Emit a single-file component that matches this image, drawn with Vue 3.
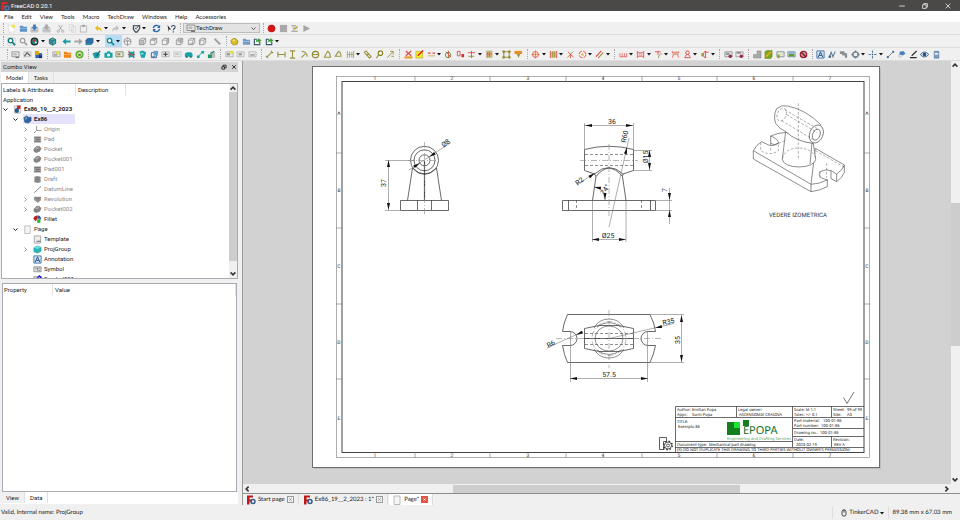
<script setup>
import { ref } from 'vue'

const menus = ['File', 'Edit', 'View', 'Tools', 'Macro', 'TechDraw', 'Windows', 'Help', 'Accessories']

/* ---- icon shapes, all drawn on a 20 x 20 grid ---- */
const cube = (c, f = 'none') => `<path fill="${f}" stroke="${c}" stroke-width="1.8" d="M10 2l7 3.500v9l-7 3.500-7-3.500v-9z"/><path fill="none" stroke="${c}" stroke-width="1.600" d="M3 5.500l7 3.500 7-3.500M10 9v9"/>`
const face = (n) => `<path fill="#f4f4f4" stroke="#8c8c8c" stroke-width="1.800" d="M3 7l4-4h10v10l-4 4H3z"/><path fill="none" stroke="#8c8c8c" stroke-width="1.600" d="M3 7h10v10M13 7l4-4"/><path fill="#9a9a9a" d="${['M3 7h10v10H3z', 'M3 7l4-4h10l-4 4z', 'M13 7l4-4v10l-4 4z', 'M6 4h10v9H6z', 'M3 17l4-4h10l-4 4z', 'M3 7l4-4v10l-4 4z'][n]}" opacity=".6"/>`
const mag = (c) => `<circle cx="8" cy="8" r="5" fill="#fff" stroke="${c}" stroke-width="3"/><path stroke="${c}" stroke-width="3.500" d="M12 12l6 6"/>`
const folder = (c) => `<path fill="${c}" d="M2 4h6l2 2h8v11H2z"/><path fill="#fff" opacity=".35" d="M2 9h16v2H2z"/>`
const disk = (c, a) => `<path fill="#d8d8d8" stroke="#9b9b9b" d="M2 10l3-4h10l3 4v8H2z"/><path fill="${c}" d="M4 13h12v3H4z"/><path fill="${a}" d="M7 1h6v6h4l-7 7-7-7h4z"/>`
const page = (c, e) => `<path fill="#e9e9e9" stroke="${c}" stroke-width="1.800" d="M2 4h16v11H2z"/>${e}`
const line = (c, d, w = 2) => `<path fill="none" stroke="${c}" stroke-width="${w}" d="${d}"/>`
const O = '#9a9440'
const R = '#e0504c'
const T = '#17a2a8'
const N = '#2c5a8c'

const shapes = {
  newdoc: `<path fill="#fff" stroke="#ccc" d="M4 3h10l3 3v12H4z"/><circle cx="14" cy="5" r="4" fill="#f5e14c"/>`,
  open: folder('#5d93c7'),
  save: disk('#aaa', '#3b79bd'),
  saveas: disk('#bbb', '#a9a9a9'),
  cut: line('#aaa', 'M6 2l7 12M14 2L7 14') + '<circle cx="5" cy="16" r="2.500" fill="none" stroke="#aaa" stroke-width="2"/><circle cx="15" cy="16" r="2.500" fill="none" stroke="#aaa" stroke-width="2"/>',
  copy: '<path fill="#f4f4f4" stroke="#ccc" stroke-width="1.500" d="M3 2h9v12H3zM8 6h9v12H8z"/>',
  paste: '<path fill="#eee" stroke="#b5b5b5" stroke-width="2" d="M3 4h14v14H3z"/><path fill="#999" d="M7 2h6v4H7z"/>',
  undo: '<path fill="#e6bd1c" d="M9 3v4c6 0 9 4 8 11-2-5-4-6-8-6v4L2 9z"/>',
  redo: '<path fill="#c2c2c2" d="M11 3v4c-6 0-9 4-8 11 2-5 4-6 8-6v4l7-7z"/>',
  draw: `<path fill="none" stroke="#34424e" stroke-width="2.500" d="M3 4h14v6l-6 8h-3l-5-6z"/>` + line('#34424e', 'M10 10l6-8M6 9l4 2'),
  refresh: line('#2a67aa', 'M3 9c1-6 9-8 13-3M17 11c-1 6-9 8-13 3', 3) + '<path fill="#2a67aa" d="M18 2v7h-7zM2 18v-7h7z"/>',
  help: '<path fill="#333" d="M1 2l8 10-4 0-1 5z"/><path fill="none" stroke="#37516b" stroke-width="2.500" d="M10 7c0-5 8-5 8 0 0 3-4 3-4 7M14 16v3"/>',
  rec: '<circle cx="10" cy="10" r="8.500" fill="#d21616"/>',
  stop: '<path fill="#a9a9a9" d="M2 2h16v16H2z"/>',
  macro: '<path fill="none" stroke="#909090" stroke-width="2.200" d="M3 4h10M6 9h10M3 16h14"/>' + line('#c7a12b', 'M8 13l9-8', 2.5),
  play: '<path fill="#a4a4a4" d="M3 2l15 8-15 8z"/>',
  fit: '<path fill="#fff" stroke="#aaa" d="M2 2h16v16H2z"/>' + mag('#12777d'),
  fitsel: mag('#a0a0a0'),
  style: '<circle cx="10" cy="10" r="7.500" fill="#1c8686" stroke="#222" stroke-width="2.500"/><path fill="#c43232" d="M6 6h5v5H6z"/><circle cx="13" cy="12" r="2" fill="#fff"/>',
  bbox: cube('#235c60', '#3bb2a0') + '<path fill="#3f78ad" d="M5 8h6v7H5z"/>',
  back: '<path fill="#1b9aa0" d="M1 10l8-7v5h10v4H9v5z"/>',
  fwd: '<path fill="#a5a5a5" d="M19 10l-8-7v5H1v4h10v5z"/>',
  link: '<path fill="#2f6fa8" stroke="#1d3f66" d="M2 7l4-4h12v10l-5 4H2z"/><path fill="#1b9aa0" d="M2 18l6-6v3h5v3z"/>',
  zoom: mag('#11868c'),
  iso: cube('#8f8f8f', '#f4f4f4') + line('#8f8f8f', 'M0 10h20M10 0v20', 1),
  ...Object.fromEntries([0, 1, 2, 3, 4, 5].map((n) => ['f' + n, face(n)])),
  measure: line('#9a9a9a', 'M4 4l12 12', 5) + line('#fff', 'M6 4l10 10', 1),
  part: '<path fill="#d9bb26" stroke="#9b8213" stroke-width="1.500" d="M2 8l5-5 6 1 5 5-2 7-8 2-5-4z"/><path fill="#f3e37a" d="M5 8l3-3 4 2-3 4z"/>',
  group: folder('#6f9bc9'),
  linkmake: '<path fill="#fff" stroke="#34586b" stroke-width="2.500" d="M15 11v6H3V5h6"/><path fill="#3c9f3c" d="M6 13c0-6 3-8 6-8V2l7 6-7 5v-3c-3 0-4 1-6 3z"/>',
  pg: page('#888', '<path fill="#bbb" d="M5 7h8v5H5z"/><path fill="#777" d="M10 15h8v3h-8z"/>'),
  tmpl: page('#bbb', line('#666', 'M3 14l6-8 7 7', 3)),
  redraw: '<path fill="#2e62b5" d="M3 7h15v11H3z"/><path fill="#d9a51b" d="M2 2h9v9H2z"/><path fill="#1a3470" d="M11 12h7v6h-7z"/>',
  pgnew: page('#999', '<circle cx="13" cy="6" r="4" fill="#e8df45"/><path fill="#aaa" d="M4 8h8v5H4z"/>'),
  pgopen: folder('#ef8413'),
  pgref: '<circle cx="10" cy="10" r="7" fill="#fff" stroke="#66ad2e" stroke-width="4"/><path fill="#4e8b20" d="M7 8h6v5H7z"/>',
  view: `<path fill="${T}" stroke="#127177" d="M2 8l9-3 6 4-2 8-9 1z"/>` + line('#146a70', 'M10 13l8-11', 3),
  active: `<path fill="${T}" d="M1 6h5l2-3h5l2 3h4v11H1z"/><circle cx="10" cy="11" r="3.500" fill="#e8ffff"/>`,
  sec: page('#79804a', '<path fill="#9a9b4d" d="M5 7h7v5H5z"/>'),
  hatched: `<path fill="${T}" d="M4 4h12v12H4z"/>` + line('#a05a5a', 'M3 3l14 14M5 2v16M15 2v16M2 10h16', 1.8),
  detail: `<path fill="${T}" d="M3 4l7-3 8 4-3 12H7z"/><path fill="#8ee0de" d="M6 6h6v4H6z"/>`,
  spread: `<path fill="#fff" stroke="${N}" stroke-width="2" d="M3 6h11v11H3z"/><path fill="#6a9ccc" d="M8 2h10v10H8z"/>` + line(N, 'M5 14h7'),
  move: page('#aaa', line('#3c4146', 'M10 5v9M5 9.500h10', 2.5)),
  drafts: page('#c5c5c5', '<path fill="#c3c3c3" d="M5 7h8v4H5z"/>'),
  arch: `<path fill="${T}" d="M2 8l5-3h9l3 4v6H2z"/><path fill="#0c686d" d="M4 14h4v3H4zM13 14h4v3h-4z"/>`,
  proj: line(T, 'M4 15l11-11', 2) + `<path fill="${T}" d="M2 12h6v6H2zM12 2h6v6h-6z"/>`,
  clip: '<path fill="#bababa" d="M7 4h11v13H7z"/><path fill="#1b9a68" d="M2 10h9v8H2z"/>' + line('#188', 'M8 8l8-5', 2.5),
  clipnew: page('#aaa', '<path fill="#8aa08a" d="M4 7h7v5H4z"/><circle cx="15" cy="5" r="4" fill="#e4e04a"/>'),
  clipadd: page('#b5b5b5', '<path fill="#999" d="M6 7h7v5H6z"/>'),
  clipdel: page('#b5b5b5', '<path fill="#aaa" d="M5 9h10v4H5z"/>'),
  len: line(O, 'M4 16l12-12M2 13l5 5M13 2l5 5', 2.5),
  hor: line(O, 'M2 4v12M18 4v12M2 10h16', 2.5),
  ver: line(O, 'M4 2h12M4 18h12M10 2v16', 2.5),
  rad: line(O, 'M4 3c8 0 12 6 12 12M3 17l9-9', 2.5),
  dia: '<circle cx="10" cy="10" r="7" fill="none" stroke="#8d8726" stroke-width="2.500"/>' + line(O, 'M2 10h16', 2.5),
  ang: line(O, 'M2 16h16M3 16L10 3c4 1 6 5 6 12', 2.5),
  ang3: line(O, 'M10 3L3 14h10M10 3c5 2 6 6 5 13', 2.5),
  ext: line('#a5a36f', 'M3 2v16M8 4v13M13 4v13M17 2v16M3 10h14', 2),
  chain: line(O, 'M3 5l4-3 5 6-4 3zM9 12l4-3 5 6-4 3z', 2.5),
  ball: line(O, 'M3 18l5-7', 2.5) + '<circle cx="12" cy="7" r="5" fill="none" stroke="#8d8726" stroke-width="2.500"/>',
  axo: line(O, 'M3 17L16 3M12 14h6M9 3h7v7', 2),
  erase: line(R, 'M4 2l12 11M16 2L4 13', 3) + '<path fill="#e5a02d" d="M1 14h18v5H1z"/>',
  attr: '<path fill="#f4ec29" stroke="#9b8d16" d="M2 3h15v15H2z"/>' + line('#d22', 'M6 13L18 1', 3),
  cen: line(R, 'M2 7h6M12 7h6', 3) + line('#dba94c', 'M2 13h16', 2),
  bolt: line(R, 'M4 4l12 12M10 2v16', 2) + '<circle cx="9" cy="11" r="6" fill="none" stroke="#6a8a2a" stroke-width="2"/>',
  vert: '<path fill="none" stroke="#c55" stroke-width="2" d="M3 3h6v10H3z"/><path fill="#c33" d="M12 9h6v7h-6z"/>',
  cline: line(R, 'M2 6h16M10 2v16') + line(O, 'M3 14h13'),
  hat: '<path fill="#d7b67e" stroke="#9b8" d="M3 2h13v15H3z"/>' + line(R, 'M6 4v12M10 4v12M3 9h13', 1.5),
  frame: '<path fill="none" stroke="#9c9440" stroke-width="2.500" d="M4 4h12v12H4z"/><path fill="#8d8726" d="M1 1h5v5H1zM14 1h5v5h-5zM1 14h5v5H1zM14 14h5v5h-5z"/>',
  weld: '<path fill="#e99b1f" d="M1 2h17v7H1z"/><path fill="#9c9440" d="M6 9h8l-4 9z"/>' + line(R, 'M4 4l3 3M12 4l3 3'),
  target: `<circle cx="10" cy="10" r="6.500" fill="#fbe9cf" stroke="${R}" stroke-width="2"/>` + line('#d9663f', 'M10 1v18M1 10h18', 1.5),
  thread: '<path fill="#c9c58d" d="M4 3h12v14H4z"/>' + line(R, 'M3 2v16M17 2v16') + line('#9c9440', 'M8 3v14M12 3v14'),
  inter: line(O, 'M3 17L16 3') + line(R, 'M4 4l13 12M10 9v9'),
  arc: `<circle cx="10" cy="10" r="7.500" fill="none" stroke="${R}" stroke-width="2" stroke-dasharray="9 3"/><circle cx="10" cy="10" r="2.500" fill="#e3a321"/>`,
  par: line(R, 'M2 15L14 2', 2.5) + line(O, 'M7 18L18 6', 2.5),
  posh: line(R, 'M2 7v8M7 7v8M12 7v8M17 7v8M2 15h16', 1.6),
  posc: line(R, 'M3 2v16M17 2v16M3 6h14M3 14h14', 1.8) + line('#e99', 'M7 8h6v4H7z', 2),
  posa: line(R, 'M2 4h13M9 2v9') + line(O, 'M10 18c0-6 3-9 8-10'),
  cham: line(R, 'M3 3v4M17 3v4M3 5h14M3 17l3-8h8l3 8', 1.8) + line('#c3a35d', 'M2 9h16', 1.5),
  arcl: line(R, 'M3 17h14M5 15c0-3 3-5 5-5s5 2 5 5', 2.2) + '<circle cx="10" cy="6" r="4" fill="none" stroke="#e0504c" stroke-width="2.200"/>',
  fmt: line(R, 'M14 3C5 3 4 17 14 17M12 3v14M14 5h5', 2.2) + '<path fill="#9c9440" d="M3 7h5v7H3z"/>',
  exsvg: page('#888', '<path fill="#8c9c8c" d="M4 6h8v5H4z"/><circle cx="14" cy="14" r="4" fill="#9d2846"/>'),
  exdxf: page('#999', '<path fill="#777" d="M4 5h9v3H4z"/><circle cx="14" cy="14" r="4" fill="#9d2846"/>'),
  hatch: '<path fill="#a9a9a9" stroke="#878787" d="M9 2h9v16H1V10h8z"/>',
  geo: '<path fill="#75a71c" stroke="#5f7a1b" d="M2 4l4-3h12v14l-3 4H2z"/><path fill="#dcae26" d="M3 12L15 3l2 2L5 17z"/>',
  sym: page('#7b8692', '<path fill="#dbe8c0" d="M5 6h10v6H5z"/><path fill="#8fa52d" d="M3 10h5v8H3z"/>'),
  img: page('#5a7d99', '<path fill="#86b4d8" d="M4 5h12v4H4z"/><path fill="#5e9d2c" d="M4 9h12v5H4z"/>'),
  toggle: '<circle cx="10" cy="10" r="7" fill="#b9a9a9" stroke="#a51f2d" stroke-width="3"/>' + line('#7d1b28', 'M5 5l10 10', 3),
  anno: '<path fill="#dce9f6" stroke="#3a6fa8" stroke-width="2" d="M2 2h16v16H2z"/><path fill="none" stroke="#244f83" stroke-width="2.200" d="M5 16l5-12 5 12M7 12h6"/>',
  leader: line('#5d7e9d', 'M3 16L7 5l4 10L16 3', 2.5) + '<circle cx="4" cy="15" r="3" fill="#476784"/>',
  rich: '<path fill="#8c8f93" d="M2 3h9l3 4h4v10h-5v-5H8l-2-3H2z"/>',
  cosv: '<circle cx="10" cy="10" r="6" fill="none" stroke="#6f818f" stroke-width="3"/>' + line('#6f818f', 'M10 1v5M10 14v5M1 10h5M14 10h5', 3),
  cosm: line('#6684a3', 'M10 1v6M10 13v6M1 10h6M13 10h6', 2.5) + '<circle cx="10" cy="10" r="1.500" fill="#2c5a8c"/>',
  cosl: line('#5b84ad', 'M4 16L16 4', 2) + '<circle cx="4" cy="16" r="2.500" fill="#4a7094"/><circle cx="16" cy="4" r="2.500" fill="#4a7094"/>',
  eraser: '<path fill="#4a83bd" d="M6 4l8-2 5 6-6 4-8-2z"/><path fill="#d4d4d4" d="M3 10l9 4-5 4-5-3z"/>',
  decor: line('#3f3f3f', 'M6 13L17 2', 3) + line('#111', 'M2 17h15', 2.5),
  eye: '<path fill="#e7eef5" stroke="#2f5277" stroke-width="2.200" d="M1 10c5-7 13-7 18 0-5 7-13 7-18 0z"/><circle cx="10" cy="10" r="4" fill="#1e4d84"/>',
  weldsym: '<path fill="#7ea2c5" stroke="#4c6d8f" stroke-width="1.500" d="M5 3h10v15H5z"/><path fill="#fff" d="M6 7h8v3H6z"/>',
}

/* "|" is a drag handle, "-" a plain gap, a trailing "^" adds a drop-down arrow.
   Widths are shares of a row of 1920 units. */
function row(spec) {
  const items = spec.split(' ').map((t) => {
    if (t === '|') return { kind: 'handle', span: 12 }
    if (t === '-') return { kind: 'gap', span: 6 }
    if (t === 'pad') return { kind: 'gap', span: 8 }
    if (t === 'workbench') return { kind: 'workbench', span: 154 }
    const drop = t.endsWith('^')
    return { kind: 'tool', name: drop ? t.slice(0, -1) : t, drop, span: drop ? 35 : 23 }
  })
  const used = items.reduce((s, i) => s + i.span, 0)
  return [...items, { kind: 'gap', span: 1920 - used }]
}

const rows = [
  row('| newdoc open save saveas - cut copy paste - undo^ redo^ - draw^ - refresh - help | workbench | rec stop macro play'),
  row('| fit fitsel style^ bbox - back fwd link^ - zoom^ iso - f0 f1 f2 - f3 f4 f5 - measure | part group linkmake linkmake^'),
  row('pad | pg tmpl redraw | pgnew pgopen pgref | view active sec hatched detail spread move drafts arch proj clip | clipnew clipadd clipdel | len hor ver rad dia ang ang3 ext^ chain ball axo | erase attr cen^ bolt vert cline^ hat^ frame weld | target^ thread^ inter arc^ par^ | posh^ posc^ posa^ cham arcl^ fmt^ | exsvg exdxf | hatch geo sym img toggle | anno leader rich cosv^ cosm^ cosl eraser decor eye weldsym'),
]

const treeIcons = {
  doc: '<path fill="#eee" stroke="#aaa" stroke-width="1.500" d="M3 2h14v16H3z"/><path fill="#c22" d="M9 1h8l-1 8H9z"/><path fill="#2f5b92" d="M4 9l5-3 4 3v7l-4 2-5-2z"/>',
  body: '<path fill="#2f65a4" stroke="#173c68" d="M2 6l6-4 4 3h6v8l-6 5-8-2z"/><path fill="#6f9ccb" d="M4 7l4-3 2 4-4 3z"/>',
  origin: line('#8b8b8b', 'M8 2v10h11M8 12l-6 6', 2),
  pad: '<path fill="#a5a5a5" d="M2 3h16v14H2z"/>' + line('#696969', 'M4 6h12M4 14h12M6 10h9', 2),
  pocket: '<path fill="#858585" stroke="#6c6c6c" d="M2 9l6-6h6l4 4-3 7-8 3-5-3z"/><path fill="#b5b5b5" d="M8 5h6l-4 4H5z"/>',
  draft: '<path fill="#8f8f8f" d="M3 4l7-2 7 2v12l-7 2-7-2z"/>' + line('#777', 'M5 6h10M5 10h10M5 14h10', 1.5),
  datum: line('#777', 'M3 17L18 3', 2),
  rev: '<path fill="#9c9c9c" d="M2 4h16v7l-7 7-9-7z"/>' + line('#6d6d6d', 'M4 7h12M8 11h6', 2),
  fillet: '<path fill="#b81f1f" d="M1 9c0-6 5-8 9-8v9l-4 4z"/><path fill="#274f8a" d="M10 1c5 0 9 4 8 10h-8z"/><path fill="#27b53a" stroke="#fff" d="M9 9h8v9H9z"/>',
  page: '<path fill="#f6f6f6" stroke="#a5a5a5" stroke-width="1.500" d="M4 2h12v17H4z"/>',
  template: '<path fill="#eee" stroke="#9a9a9a" stroke-width="1.800" d="M3 2h14v16H3z"/>' + line('#777', 'M8 14h9', 2.500),
  projgroup: '<path fill="#25b7bd" stroke="#14858a" d="M2 6l8-4 8 3v9l-8 4-8-3z"/><path fill="#70dde0" d="M2 6l8-4 8 3-8 4z"/>',
  anno: shapes.anno,
  symbol: '<path fill="#ddd" stroke="#888" stroke-width="1.800" d="M2 4h16v11H2z"/>' + line('#777', 'M5 7h5v5M12 7h4M12 12h4', 1.800),
  symbol1: '<path fill="#ddd" stroke="#888" stroke-width="1.800" d="M2 4h16v11H2z"/>' + line('#1a1aee', 'M7 10l7-8 4 3-7 9', 3),
}

const tree = [
  { t: 'Ex86_19__2_2023', i: 'doc', l: 0, c: 'open', bold: true },
  { t: 'Ex86', i: 'body', l: 1, c: 'open', bold: true, sel: true },
  { t: 'Origin', i: 'origin', l: 2, c: 'shut', hidden: true },
  { t: 'Pad', i: 'pad', l: 2, c: 'shut', hidden: true },
  { t: 'Pocket', i: 'pocket', l: 2, c: 'shut', hidden: true },
  { t: 'Pocket001', i: 'pocket', l: 2, c: 'shut', hidden: true },
  { t: 'Pad001', i: 'pad', l: 2, c: 'shut', hidden: true },
  { t: 'Draft', i: 'draft', l: 2, hidden: true },
  { t: 'DatumLine', i: 'datum', l: 2, hidden: true },
  { t: 'Revolution', i: 'rev', l: 2, c: 'shut', hidden: true },
  { t: 'Pocket002', i: 'pocket', l: 2, c: 'shut', hidden: true },
  { t: 'Fillet', i: 'fillet', l: 2 },
  { t: 'Page', i: 'page', l: 1, c: 'open' },
  { t: 'Template', i: 'template', l: 2 },
  { t: 'ProjGroup', i: 'projgroup', l: 2, c: 'shut' },
  { t: 'Annotation', i: 'anno', l: 2 },
  { t: 'Symbol', i: 'symbol', l: 2 },
  { t: 'Symbol001', i: 'symbol1', l: 2 },
]

const docTabs = ref([
  { t: 'Start page', i: 'app' },
  { t: 'Ex86_19__2_2023 : 1*', i: 'app' },
  { t: 'Page*', i: 'page', active: true },
])

/* ---- drawing sheet ---- */
const columns = [375, 452, 528, 603, 679, 754, 830]
const columnTicks = [415, 490, 566, 642, 717, 793]
const bands = [['A', 113], ['B', 190], ['C', 266], ['D', 342], ['E', 418]]
const bandTicks = [153, 228, 304, 379]

/* arrow heads: tip x, tip y, direction in degrees (0 points right) */
const arrows = [
  [388.5, 160, -90], [388.5, 210, 90], [420, 163, -32], [429, 157, 148],
  [585, 125.5, 180], [633, 125.5, 0], [649.5, 150, -90], [649.5, 170, 90],
  [669.5, 200, 90], [669.5, 210, -90], [627, 147, -77], [595, 173, -35], [594, 187, 190], [605, 200, 90],
  [592, 239.5, 180], [626, 239.5, 0],
  [570, 378.5, 180], [648, 378.5, 0], [681.5, 315, -90], [681.5, 362, 90],
  [655, 328, 167], [576, 335, 155],
]

const dims = [
  ['37', 386, 183, -90], ['Ø8', 447, 145, -35], ['36', 612, 124, 0], ['R60', 627, 137, -77],
  ['Ø15', 648, 157, -90], ['7', 667, 190, -90], ['R2', 581, 183, -40], ['74°', 607, 191, -55],
  ['Ø25', 608, 238, 0], ['57.5', 609, 377, 0], ['R35', 669, 324, -13], ['35', 680, 340, -90], ['R6', 552, 346, -30],
]

const block = [
  ['Author:', 677, 411], ['Emilian Popa', 692, 411], ['Appr.:', 677, 416], ['Sorin Popa', 692, 416],
  ['Legal owner:', 738, 411], ['ASCENSOMIX CRAIOVA', 739, 416],
  ['Scale: M 1:1', 794, 411], ['Toler.: +/- 0.1', 794, 416], ['Sheet:', 833, 411], ['99 of 99', 847, 411],
  ['Size:', 833, 416], ['A3', 847, 416], ['TITLE:', 677, 423], ['Exemplu 86', 678, 428],
  ['Part material:', 794, 422], ['100-01-86', 823, 422], ['Part number:', 794, 427], ['100-01-86', 821, 427],
  ['Drawing no.:', 794, 434], ['100-01-86', 820, 434], ['Date:', 794, 441], ['2023-02-19', 796, 446],
  ['Revision:', 833, 441], ['REV A', 834, 446], ['Document type:', 677, 446], ['Mechanical part drawing', 709, 446],
]
</script>

<template>
  <div class="app">
    <header class="titlebar">
      <svg class="ic" viewBox="0 0 20 20"><path fill="#d42a2a" d="M3 2h12v4H8v4h5v4H8v5H3z" /><circle cx="14" cy="14" r="4" fill="none" stroke="#4a78b5" stroke-width="3" /></svg>
      <span class="title">FreeCAD 0.20.1</span>
      <div class="winbtns">
        <button aria-label="Minimize"><svg viewBox="0 0 20 20"><path d="M3 10h14" /></svg></button>
        <button aria-label="Restore"><svg viewBox="0 0 20 20"><path d="M4 7h9v9H4zM7 7V4h9v9h-3" /></svg></button>
        <button aria-label="Close"><svg viewBox="0 0 20 20"><path d="M4 4l12 12M16 4L4 16" /></svg></button>
      </div>
    </header>

    <nav class="menubar">
      <button v-for="m in menus" :key="m">{{ m }}</button>
    </nav>

    <div v-for="(r, n) in rows" :key="n" class="toolrow">
      <div v-for="(it, k) in r" :key="k" :class="['slot', it.kind]" :style="{ flexGrow: it.span }">
        <template v-if="it.kind === 'tool'">
          <button class="tool" :class="{ hot: it.name === 'zoom' }" :aria-label="it.name">
            <svg class="ic" viewBox="0 0 20 20" v-html="shapes[it.name]"></svg>
            <svg v-if="it.drop" class="drop" viewBox="0 0 8 8"><path d="M0 2h8L4 7z" /></svg>
          </button>
        </template>
        <label v-else-if="it.kind === 'workbench'" class="bench">
          <svg class="ic" viewBox="0 0 20 20" v-html="shapes.pg"></svg>
          <select aria-label="Workbench"><option>TechDraw</option></select>
          <svg class="chev" viewBox="0 0 10 10"><path d="M1 3l4 4 4-4" /></svg>
        </label>
      </div>
    </div>

    <div class="body">
      <aside class="dock">
        <div class="dockhead">
          <span>Combo View</span>
          <button aria-label="Float"><svg viewBox="0 0 20 20"><path d="M3 9h9v8H3zM7 9V4h10v9h-5" /></svg></button>
          <button aria-label="Close panel"><svg viewBox="0 0 20 20"><path d="M4 4l12 12M16 4L4 16" /></svg></button>
        </div>
        <div class="tabs top"><button class="on">Model</button><button>Tasks</button></div>

        <section class="treebox">
          <div class="treemain">
            <div class="cols"><span>Labels &amp; Attributes</span><span>Description</span></div>
            <div class="approw">Application</div>
            <ul>
              <li v-for="n in tree" :key="n.t" :class="['lv' + n.l, { muted: n.hidden, bold: n.bold, sel: n.sel }]">
                <svg class="twist" viewBox="0 0 10 10"><path v-if="n.c === 'open'" class="o" d="M1 3l4 4 4-4" /><path v-else-if="n.c" d="M3 1l4 4-4 4" /></svg>
                <span class="node"><svg class="ic" viewBox="0 0 20 20" v-html="treeIcons[n.i]"></svg>{{ n.t }}</span>
              </li>
            </ul>
          </div>
          <div class="vbar">
            <svg viewBox="0 0 10 10"><path d="M2 7l3-3 3 3" /></svg>
            <i class="tthumb"></i><i class="trest"></i>
            <svg viewBox="0 0 10 10"><path d="M2 3l3 3 3-3" /></svg>
          </div>
        </section>

        <section class="props"><div class="cols p"><span>Property</span><span>Value</span></div></section>
        <div class="tabs bottom"><button>View</button><button class="on">Data</button></div>
      </aside>

      <main class="mdi">
        <div class="canvasrow">
          <svg class="sheet" viewBox="243 61 708 423" preserveAspectRatio="xMidYMid meet">
            <rect x="314" y="68" width="567" height="401" fill="#bdbdbd" />
            <rect x="312.500" y="66.500" width="567" height="401" fill="#fff" stroke="#6e6e6e" />
            <rect x="336.500" y="76.500" width="533" height="381" class="thin" />
            <rect x="342" y="81.500" width="522" height="371" fill="none" stroke="#444" />
            <g class="thin">
              <path v-for="x in columnTicks" :key="x" :d="`M${x} 76v6M${x} 452v6`" />
              <path v-for="y in bandTicks" :key="y" :d="`M336 ${y}h6M864 ${y}h6`" />
            </g>
            <g class="zone">
              <template v-for="(x, n) in columns" :key="x"><text :x="x" y="80">{{ n + 1 }}</text><text :x="x" y="457">{{ n + 1 }}</text></template>
              <template v-for="b in bands" :key="b[0]"><text x="339" :y="b[1] + 2">{{ b[0] }}</text><text x="867" :y="b[1] + 2">{{ b[0] }}</text></template>
            </g>

            <!-- side elevation -->
            <g class="edge">
              <circle cx="424.500" cy="160.300" r="14" /><circle cx="424.500" cy="160.300" r="10.500" /><circle cx="424.500" cy="160.300" r="5.500" />
              <path d="M412.500 168L407.500 200.500M436.500 168L441.500 200.500M400.500 200.500h48v10h-48zM412.500 168Q424.500 180 436.500 168" />
              <path class="strong" d="M424.500 161v39" />
              <path d="M417.500 200v10M431.500 200v10" />
            </g>
            <path class="thin" d="M385 160.500h30M385 210.500h15M388.500 160v50M409 170L451 142.500" />
            <path class="center" d="M424.500 142v73M408 160.500h33" />

            <!-- front elevation -->
            <g class="edge">
              <path d="M584.500 149.500Q609 143 633.500 149.500V170.500L623 174M584.500 149.500V170.500L594.500 174Q609 161 623 174" />
              <path d="M594.500 174L596 176.500Q609 160 622.500 176.500L623 174M596 176.500L592.500 200.500M622.500 176.500L626 200.500M562.500 200.500h93v10h-93z" />
              <path d="M568.500 200v10M650.500 200v10" />
              <path class="dash" d="M576.500 200v10M641.500 200v10M585 154.500h48M585 165.500h48" />
            </g>
            <path class="center" d="M609 144v72M580 160.500h58" />
            <path class="thin" d="M584.500 123v26M633.500 123v26M584 125.500h49M609 227L629 138M633 150.500h19M633 170.500h19M649.500 150v20M656 200.500h16M656 210.500h16M669.500 188v36M577 184.500L595 173M594 187Q604 188 605 200M592.500 201v41M626 201v41M592 239.500h34" />

            <!-- plan -->
            <g class="edge">
              <path d="M567.500 314.500H650Q654.500 323 655.500 331.500H648A7 7 0 0 0 648 345.500H655.500Q654 354 650 362.500H567.500Q564 355 562.500 345.500H570A7 7 0 0 0 570 331.500H562.500Q563.500 323 567.500 314.500z" />
              <path d="M584.500 328.500L599 325.500H619L633.500 328.500V348.500L619 351.500H599L584.500 348.500z" />
              <path class="fine" d="M594 328A17 17 0 0 1 624 328M594 349A17 17 0 0 0 624 349M597 327Q609 318 621 327M597 350Q609 359 621 350" />
              <path class="strong" d="M584 338.500h49" />
              <ellipse class="fine" cx="609" cy="338.500" rx="14" ry="12.500" /><circle class="center" cx="609" cy="338.500" r="17" />
              <path class="dash" d="M585 333.500h48M585 344.500h48" />
            </g>
            <path class="center" d="M609 310v58M556 338.500h106" />
            <path class="thin" d="M570.500 331v51M647.500 331v51M570 378.500h78M609 338.500L674 323.500M650 314.500h34M650 362.500h34M681.500 315v47M547 348L583 331.500" />

            <!-- isometric -->
            <g class="iso" transform="translate(730 90) scale(.3333)">
              <path d="M70 182Q80 163 95 155L118 166Q130 170 145 160Q147 148 122 138Q140 129 168 127M256 175L343 225Q338 240 320 252L303 242Q290 236 272 244Q262 254 275 264L292 270Q268 282 243 283zM70 182V207L243 305V283M243 305Q270 302 292 290V268M320 252V275Q338 262 343 247V225M320 275L303 266V242M122 138V160Q132 168 145 160" />
              <path d="M70 182L243 283" />
              <path fill="#fff" d="M167 125L157 208A50 23 0 0 0 257 208L250 160Q205 152 167 125" />
              <path d="M167 125Q205 148 230 156" />
              <path fill="#fff" d="M167 125Q146 115 137 100Q129 78 140 56Q155 43 173 48Q230 60 272 104L248 160Q200 155 167 125M240 222L246 160" />
              <ellipse fill="#fff" cx="259" cy="132" rx="20" ry="28" transform="rotate(22 259 132)" />
              <ellipse cx="259" cy="134" rx="11" ry="17" transform="rotate(22 259 134)" />
              <g class="dash"><path d="M165 60L262 116M170 74L262 128M155 92L250 149M92 158V182Q120 200 145 182V158M122 160V185M157 205Q165 175 207 174Q250 177 257 205M257 182L343 232M270 243V270M290 220V264M205 40V210M145 160L170 150" /><ellipse cx="155" cy="74" rx="13" ry="20" transform="rotate(22 155 74)" /></g>
            </g>
            <text x="769" y="217" class="iso-label">VEDERE IZOMETRICA</text>

            <path v-for="(a, n) in arrows" :key="n" class="head" d="M0 0L-7 1.500V-1.500z" :transform="`translate(${a[0]} ${a[1]}) rotate(${a[2]})`" />
            <text v-for="d in dims" :key="d[0]" class="dimtext" :transform="`translate(${d[1]} ${d[2]}) rotate(${d[3]})`">{{ d[0] }}</text>

            <!-- title block -->
            <path class="edge" d="M675.500 452V406.500H864M675 417.500h189M793 428.500h71M793 436.500h71M675 441.500h118M675 447.500h189M736.500 406v11M792.500 406v41M831.500 406v11M831.500 436v11" />
            <path fill="none" stroke="#777" d="M843.500 397.500L847 403.500L854 392" />
            <g class="block">
              <text v-for="(b, n) in block" :key="n" :x="b[1]" :y="b[2]">{{ b[0] }}</text>
              <text x="677" y="451">(R) DO NOT DUPLICATE THIS DRAWING TO THIRD PARTIES WITHOUT OWNER'S PERMISSION!</text>
              <text x="727" y="440" class="sub">Engineering and Drafting Services</text>
            </g>
            <path fill="#12801c" d="M727 422h13v13h-13zM743 420h6v6h-6z" /><path fill="#19e632" d="M734 422h6v6h-6z" />
            <text x="743" y="434" class="logo">EPOPA</text>
            <g fill="#fff" stroke="#333"><path d="M664.500 449.500h-5v-12h7v4h-3v8" stroke-width=".8" /><circle cx="668" cy="445.500" r="4.200" stroke-width="1.500" stroke-dasharray="1.600 1.700" /><circle cx="668" cy="445.500" r="3.500" stroke-width=".8" /><circle cx="668" cy="445.500" r="1.500" stroke-width=".8" /></g>
          </svg>
          <div class="vbar big">
            <svg viewBox="0 0 10 10"><path d="M2 7l3-3 3 3" /></svg>
            <i class="b1"></i><i class="bthumb"></i><i class="b2"></i>
            <svg viewBox="0 0 10 10"><path d="M2 3l3 3 3-3" /></svg>
          </div>
        </div>
        <div class="hbar">
          <svg viewBox="0 0 10 10"><path d="M7 2L4 5l3 3" /></svg>
          <i class="h1"></i><i class="hthumb"></i><i class="h2"></i>
          <svg viewBox="0 0 10 10"><path d="M3 2l3 3-3 3" /></svg>
        </div>
        <div class="doctabs">
          <div v-for="d in docTabs" :key="d.t" class="doctab" :class="{ on: d.active }">
            <svg v-if="d.i === 'app'" class="ic" viewBox="0 0 20 20"><path fill="#c01818" d="M2 1h12v4H7v4h5v4H7v6H2z" /><circle cx="14" cy="13" r="4" fill="none" stroke="#33598e" stroke-width="3" /></svg>
            <svg v-else class="ic" viewBox="0 0 20 20" v-html="treeIcons.page"></svg>
            <button class="name">{{ d.t }}</button>
            <button class="x" :aria-label="'Close ' + d.t"><svg viewBox="0 0 10 10"><path d="M3 3l4 4M7 3L3 7" /></svg></button>
          </div>
        </div>
      </main>
    </div>

    <footer class="status">
      <span class="msg">Valid, Internal name: ProjGroup</span>
      <button class="nav"><svg class="mouse" viewBox="0 0 14 20"><rect x="2" y="2" width="10" height="16" rx="5" /><path d="M7 2v7" /></svg>TinkerCAD<svg class="drop" viewBox="0 0 8 8"><path d="M0 2h8L4 7z" /></svg></button>
      <span class="size">89.38 mm x 67.03 mm</span>
    </footer>
  </div>
</template>

<style>
body { margin: 0; background: #f0f0f0; }
</style>

<style scoped>
.app { display: flex; flex-direction: column; height: 100vh; overflow: hidden; background: #f0f0f0; color: #1c1c1c; font: 6px/10px Roboto, "Open Sans", sans-serif; }
button { padding: 0; border: 0; background: none; color: inherit; font: inherit; text-rendering: inherit; white-space: nowrap; }
svg { display: block; flex: none; }
.ic { width: 10px; height: 10px; }

.titlebar { display: flex; align-items: center; height: 11px; flex: none; padding: 0 4px 0 0; background: #4b4947; color: #fff; }
.titlebar .ic { margin: 0 1px 0 0; }
.title { flex: 1; }
.winbtns { display: flex; gap: 15px; padding-right: 4px; }
.winbtns button { width: 8px; height: 8px; }
.winbtns svg { width: 8px; height: 8px; fill: none; stroke: #eee; stroke-width: 2; }

.menubar { display: flex; align-items: center; gap: 8px; flex: none; height: 11px; padding: 1px 4px 0; box-sizing: border-box; background: #fff; font-family: Lato, sans-serif; }

.toolrow { display: flex; flex: none; height: 13px; box-sizing: border-box; border-bottom: 1px solid #dcdcdc; }
.slot { flex: 0 0 0; min-width: 0; display: flex; align-items: center; }
.handle { justify-content: center; }
.handle::before { content: ""; height: 10px; border-left: 1px dotted #a8a8a8; }
.tool { display: flex; align-items: center; justify-content: space-between; width: 100%; height: 12px; }
.tool .ic { width: 9px; height: 9px; margin-left: 1px; }
.tool.hot { background: #b9dcf6; }
.drop { width: 4px; height: 4px; margin-right: 2px; fill: #111; }
.bench { display: flex; align-items: center; flex: 1; height: 10px; box-sizing: border-box; padding: 0 3px 0 2px; border: 1px solid #bdbdbd; background: #e3e3e3; }
.bench select { flex: 1; min-width: 0; appearance: none; border: 0; padding: 0; background: none; color: inherit; font: inherit; line-height: 8px; height: 8px; }
.chev { width: 5px; height: 5px; fill: none; stroke: #555; stroke-width: 2; }

.body { display: flex; flex: 1; min-height: 0; }
.dock { display: flex; flex-direction: column; flex: 0 0 242px; box-sizing: border-box; padding: 1px 4px 0 1px; }
.dockhead { display: flex; align-items: center; gap: 4px; flex: none; height: 10px; padding: 0 1px 0 2px; background: #d3d3d3; }
.dockhead span { flex: 1; }
.dockhead svg { width: 6px; height: 6px; fill: none; stroke: #222; stroke-width: 3; }
.tabs { display: flex; flex: none; height: 11px; }
.tabs button { height: 11px; padding: 0 5px; border-right: 1px solid #e0e0e0; }
.top { font-family: Lato, sans-serif; }
.tabs .on { background: #fff; }
.bottom { height: 12px; background: #fff; margin-bottom: 1px; }
.bottom button:not(.on) { background: #f0f0f0; }
.treebox { display: flex; flex: 195 0 0; min-height: 0; border: 1px solid #a9adb3; background: #fff; box-sizing: border-box; }
.treemain { flex: 1; min-width: 0; overflow: hidden; }
.cols { display: grid; grid-template-columns: 74px 50px 1fr; height: 11px; line-height: 12px; }
.cols span { padding-left: 1px; border-right: 1px solid #e4e4e4; }
.cols span + span { padding-left: 2px; }
.cols.p { grid-template-columns: 50px 1fr; }
.approw { height: 9px; padding-left: 1px; line-height: 10px; }
ul { margin: 0; padding: 0; list-style: none; }
li { display: flex; align-items: center; width: 73px; height: 10px; box-sizing: border-box; white-space: nowrap; }
.lv0 { padding-left: 1px; }
.lv1 { padding-left: 11px; }
.lv2 { padding-left: 21px; }
.node { display: flex; align-items: center; gap: 2px; flex: 1; height: 10px; }
.node .ic { width: 9px; height: 9px; }
.twist { width: 5px; height: 5px; margin-right: 5px; fill: none; stroke: #999; stroke-width: 2; }
.twist .o { stroke: #222; }
.muted { color: #8b8b8b; }
.bold { font-weight: 700; }
.sel .node { background: #e5e2fb; }
.props { flex: 209 0 0; margin: 4px 1px 0; border: 1px solid #a9adb3; background: #fff; box-sizing: border-box; }

.vbar { display: flex; flex-direction: column; flex: none; width: 8px; background: #f0f0f0; }
.vbar svg, .hbar svg { width: 8px; height: 8px; fill: none; stroke: #333; stroke-width: 2; }
.tthumb { flex: 168; background: #cdcdcd; }
.trest { flex: 9; }
.vbar.big { width: 9px; }
.b1 { flex: 133; }
.bthumb { flex: 143; background: #cdcdcd; }
.b2 { flex: 129; }

.mdi { display: flex; flex-direction: column; flex: 1; min-width: 0; border-left: 1px solid #9a9a9a; box-sizing: border-box; }
.canvasrow { display: flex; flex: 1; min-height: 0; background: #d2d2d2; }
.sheet { flex: 1; min-width: 0; height: 100%; text-rendering: geometricPrecision; }
.hbar { display: flex; align-items: center; flex: none; height: 9px; padding-right: 9px; background: #f0f0f0; border-bottom: 1px solid #8c8c8c; }
.hbar i { height: 8px; }
.h1 { flex: 202; }
.hthumb { flex: 287; background: #cdcdcd; }
.h2 { flex: 203; }
.doctabs { display: flex; gap: 1px; flex: none; height: 11px; font-family: Lato, sans-serif; text-rendering: geometricPrecision; }
.doctab { display: flex; align-items: center; gap: 2px; padding: 0 4px 0 3px; border-right: 1px solid #ddd; }
.doctab.on { background: #fff; }
.x svg { width: 7px; height: 7px; box-sizing: border-box; border: 1px solid #999; fill: none; stroke: #888; stroke-width: 2; }
.on .x svg { border-color: #df5640; background: #df5640; stroke: #fff; }

.status { display: flex; align-items: center; flex: none; height: 15px; padding: 0 8px 0 1px; font-family: Lato, sans-serif; text-rendering: geometricPrecision; }
.msg { flex: 1; }
.nav { display: flex; align-items: center; gap: 2px; height: 12px; padding: 0 2px 0 8px; border-left: 1px solid #ddd; border-right: 1px solid #ddd; }
.mouse { width: 6px; height: 8px; fill: none; stroke: #222; stroke-width: 2; }
.size { padding-left: 3px; }

.thin { fill: none; stroke: #777; stroke-width: .6; }
.edge { fill: none; stroke: #444; stroke-width: .8; }
.fine { stroke-width: .6; }
.strong { stroke-width: 1.2; }
.dash { stroke-dasharray: 3 2; stroke-width: .6; }
.center { fill: none; stroke: #888; stroke-width: .6; stroke-dasharray: 6 2 1 2; }
.iso { fill: none; stroke: #555; stroke-width: 2; }
.iso .dash { stroke-width: 1.400; stroke-dasharray: 8 5; }
.head { fill: #111; }
.zone { font-size: 5px; fill: #333; text-anchor: middle; }
.dimtext { font-size: 7px; fill: #222; text-anchor: middle; }
.iso-label { font-size: 6px; fill: #333; }
.block { font: 4px "Noto Sans", sans-serif; fill: #111; }
.block .sub { fill: #58a058; }
.logo { font: 11px "Noto Sans", sans-serif; fill: #14701f; }
</style>
